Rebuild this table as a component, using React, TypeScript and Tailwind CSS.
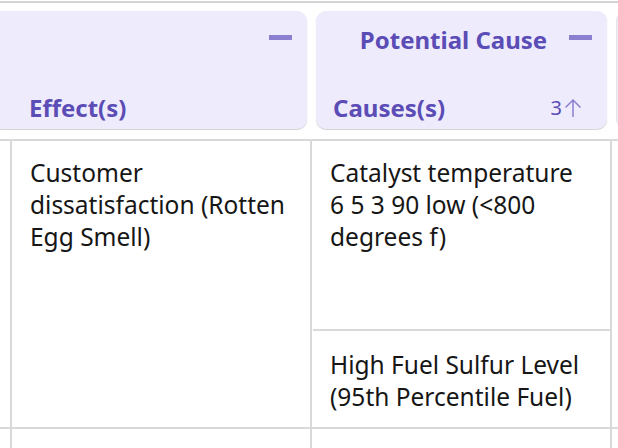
import React from "react";

const Minus = () => <div className="w-[23px] h-[5px] bg-[#8b80cf]" />;

export default function App() {
  const font = { fontFamily: '"Noto Sans", "Open Sans", sans-serif' };
  return (
    <div className="w-[618px] h-[448px] overflow-hidden bg-white relative" style={font}>
      <div className="h-[1px]" />
      <div className="h-[2px] bg-[#d3d3d3]" />
      <div className="h-[8px]" />
      {/* header row */}
      <div className="flex gap-[9px] h-[118px]">
        <div className="w-[307px] shrink-0 h-full bg-[#eeebfd] rounded-r-[10px] shadow-[0_1px_1px_rgba(0,0,0,0.18)] flex flex-col pl-[29px] pr-[15px]">
          <div className="flex justify-end pt-[24px] h-[45px]">
            <Minus />
          </div>
          <div className="flex-1" />
          <div className="text-[24px] font-bold text-[#5b4db5] leading-[30px] pb-[6px]">Effect(s)</div>
        </div>
        <div className="w-[291px] shrink-0 h-full bg-[#eeebfd] rounded-[10px] shadow-[0_1px_1px_rgba(0,0,0,0.18)] flex flex-col pl-[17px] pr-[15px]">
          <div className="relative flex justify-center items-start h-[45px] pt-[14px]">
            <div className="text-[24px] font-bold text-[#5b4db5] leading-[30px] mr-[18px]">Potential Cause</div>
            <div className="absolute right-0 top-[24px]">
              <Minus />
            </div>
          </div>
          <div className="flex-1" />
          <div className="flex items-end justify-between pb-[6px]">
            <div className="text-[24px] font-bold text-[#5b4db5] leading-[30px]">Causes(s)</div>
            <div className="flex items-center text-[20px] text-[#5b4db5] leading-[30px] mr-[10px]">
              3
              <svg width="18" height="20" viewBox="0 0 18 20" className="ml-[2px]" fill="none" stroke="#8b80cf" strokeWidth="1.5">
                <path d="M9 19V2M1.5 9.5L9 2l7.5 7.5" />
              </svg>
            </div>
          </div>
        </div>
        <div className="w-[40px] shrink-0 h-full bg-[#eeebfd] rounded-l-[10px] border-l border-[#e4e4e4]" />
      </div>
      <div className="h-[10px]" />
      {/* body */}
      <div className="h-[2px] bg-[#d9d9d9]" />
      <div className="flex h-[286px] text-[24.5px] leading-[32px] text-[#161616]">
        <div className="w-[10px] shrink-0" />
        <div className="w-[300px] shrink-0 border-l-2 border-[#d9d9d9] pl-[18px] pr-[14px] pt-[16px]">
          Customer dissatisfaction (Rotten Egg Smell)
        </div>
        <div className="w-[300px] shrink-0 border-l-2 border-[#d9d9d9] flex flex-col">
          <div className="h-[188px] pl-[18px] pr-[18px] pt-[16px]">
            Catalyst temperature 6 5 3 90 low (&lt;800 degrees f)
          </div>
          <div className="h-[2px] bg-[#d9d9d9] ml-[1px]" />
          <div className="flex-1 pl-[18px] pr-[10px] pt-[18px]">
            High Fuel Sulfur Level (95th Percentile Fuel)
          </div>
        </div>
        <div className="flex-1 border-l-2 border-[#d9d9d9]" />
      </div>
      <div className="h-[2px] bg-[#d9d9d9]" />
      <div className="flex h-[30px]">
        <div className="w-[10px] shrink-0" />
        <div className="w-[300px] shrink-0 border-l-2 border-[#d9d9d9]" />
        <div className="w-[300px] shrink-0 border-l-2 border-[#d9d9d9]" />
        <div className="flex-1 border-l-2 border-[#d9d9d9]" />
      </div>
    </div>
  );
}
